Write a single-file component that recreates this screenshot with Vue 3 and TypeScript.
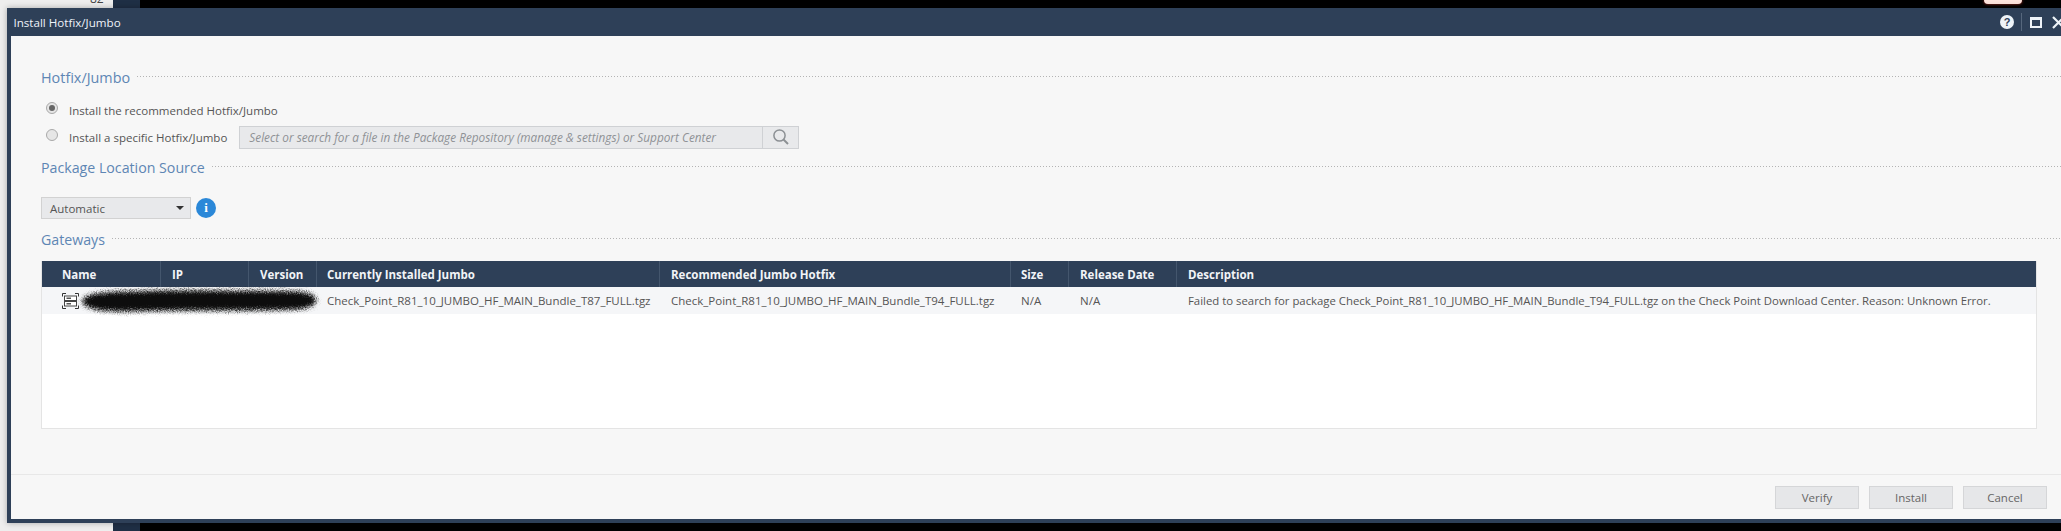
<script setup lang="ts">
const columns = [
  { label: 'Name', width: 119, pad: 20 },
  { label: 'IP', width: 88, pad: 11 },
  { label: 'Version', width: 68, pad: 11 },
  { label: 'Currently Installed Jumbo', width: 343, pad: 10 },
  { label: 'Recommended Jumbo Hotfix', width: 351, pad: 11 },
  { label: 'Size', width: 58, pad: 10 },
  { label: 'Release Date', width: 108, pad: 11 },
  { label: 'Description', width: 0, pad: 11 },
]
function colStyle(c: { width: number; pad: number }) {
  return c.width ? { width: c.width + 'px', paddingLeft: c.pad + 'px' } : { flex: '1', paddingLeft: c.pad + 'px' }
}
const cells = [
  { text: 'Check_Point_R81_10_JUMBO_HF_MAIN_Bundle_T87_FULL.tgz', width: 343, pad: 10 },
  { text: 'Check_Point_R81_10_JUMBO_HF_MAIN_Bundle_T94_FULL.tgz', width: 351, pad: 11 },
  { text: 'N/A', width: 58, pad: 10 },
  { text: 'N/A', width: 108, pad: 11 },
  {
    text: 'Failed to search for package Check_Point_R81_10_JUMBO_HF_MAIN_Bundle_T94_FULL.tgz on the Check Point Download Center. Reason: Unknown Error.',
    width: 0,
    pad: 11,
  },
]
</script>

<template>
  <div class="page">
    <div class="backdrop">
      <div class="bd-light"><span class="bd-num">82</span></div>
      <div class="bd-navy"></div>
      <div class="bd-black"></div>
    </div>
    <div class="badge"></div>
    <div class="dialog">
      <div class="titlebar">
        <span class="title">Install Hotfix/Jumbo</span>
        <div class="tools">
          <span class="help">?</span>
          <span class="sep"></span>
          <span class="maxi"></span>
          <svg class="close" width="16" height="16" viewBox="0 0 16 16"><path d="M2 3 L13 14 M13 3 L2 14" stroke="#eef3f8" stroke-width="2.2" fill="none" /></svg>
        </div>
      </div>
      <div class="body">
        <div class="content">
          <div class="section first">
            <span class="sec-title wide">Hotfix/Jumbo</span>
            <span class="dots"></span>
          </div>
          <div class="radio-row r1">
            <span class="radio on"><i></i></span>
            <span class="lbl">Install the recommended Hotfix/Jumbo</span>
          </div>
          <div class="radio-row r2">
            <span class="radio"></span>
            <span class="lbl">Install a specific Hotfix/Jumbo</span>
            <div class="search">
              <span class="ph">Select or search for a file in the Package Repository (manage &amp; settings) or Support Center</span>
              <span class="search-btn">
                <svg width="18" height="18" viewBox="0 0 18 18"><circle cx="7.5" cy="7.5" r="5.6" fill="none" stroke="#8c9094" stroke-width="1.5" /><path d="M11.5 11.5 L16 16" stroke="#8c9094" stroke-width="2" /></svg>
              </span>
            </div>
          </div>
          <div class="section second">
            <span class="sec-title">Package Location Source</span>
            <span class="dots"></span>
          </div>
          <div class="source-row">
            <div class="select"><span>Automatic</span><i class="caret"></i></div>
            <span class="info">i</span>
          </div>
          <div class="section third">
            <span class="sec-title">Gateways</span>
            <span class="dots"></span>
          </div>
          <div class="table">
            <div class="thead">
              <div v-for="c in columns" :key="c.label" class="th" :style="colStyle(c)">{{ c.label }}</div>
            </div>
            <div class="tr">
              <div class="td" :style="colStyle({ width: 275, pad: 20 })">
                <svg class="gw" width="17" height="16" viewBox="0 0 17 16">
                  <path d="M0.5 3.5 V0.5 H4 M13 0.5 H16.5 V3.5 M16.5 12.5 V15.5 H13 M4 15.5 H0.5 V12.5" fill="none" stroke="#333" stroke-width="1" />
                  <rect x="2.5" y="3" width="12" height="4.5" fill="#fff" stroke="#444" stroke-width="1" />
                  <rect x="2.5" y="8.5" width="12" height="4.5" fill="#fff" stroke="#444" stroke-width="1" />
                  <path d="M4.5 5.2 H9 M4.5 10.7 H9" stroke="#555" stroke-width="1.4" />
                </svg>
                <svg class="blur-mark" width="245" height="34" viewBox="0 0 245 34">
                  <defs>
                    <filter id="grain" x="-5%" y="-30%" width="110%" height="160%">
                      <feGaussianBlur in="SourceGraphic" stdDeviation="2" result="soft" />
                      <feTurbulence type="fractalNoise" baseFrequency="0.9" numOctaves="2" seed="4" result="noise" />
                      <feDisplacementMap in="soft" in2="noise" scale="7" xChannelSelector="R" yChannelSelector="G" />
                    </filter>
                  </defs>
                  <path
                    d="M9 17 C13 7 40 8 70 7 C110 6 170 7 205 7 C226 7 242 8 243 16 C243 25 226 26 200 26 C160 27 110 26 70 27 C40 28 12 28 9 17 Z"
                    fill="#0c0c0c"
                    filter="url(#grain)"
                  />
                </svg>
              </div>
              <div
                v-for="(cell, i) in cells"
                :key="i"
                class="td"
                :class="{ desc: !cell.width }"
                :style="colStyle(cell)"
              >{{ cell.text }}</div>
            </div>
          </div>
        </div>
        <div class="footer">
          <button class="btn">Verify</button>
          <button class="btn">Install</button>
          <button class="btn">Cancel</button>
        </div>
      </div>
    </div>
  </div>
</template>

<style>
html, body { margin: 0; padding: 0; background: #000; overflow: hidden; }
</style>

<style scoped>
.page {
  position: relative;
  width: 2061px;
  height: 531px;
  overflow: hidden;
  background: #000;
  font-family: "Open Sans", "Noto Sans", sans-serif;
}
.backdrop {
  position: absolute;
  inset: 0;
  display: flex;
}
.bd-light { width: 113px; background: #eeeeee; position: relative; overflow: hidden; }
.bd-num {
  position: absolute;
  left: 90px;
  top: -10px;
  font-size: 12px;
  color: #444;
}
.bd-navy { width: 27px; background: #1f2f45; }
.bd-black { flex: 1; background: #000; }
.badge {
  position: absolute;
  left: 1984px;
  top: 0;
  width: 38px;
  height: 4px;
  background: #fde3dc;
  border-radius: 0 0 4px 4px;
  box-shadow: 0 0 3px #c0392b;
}
.dialog {
  position: absolute;
  left: 7px;
  top: 8px;
  width: 2054px;
  height: 515px;
  display: flex;
  flex-direction: column;
  background: #2e4058;
  box-shadow: 0 0 6px rgba(0, 0, 0, 0.3);
}
.titlebar {
  height: 28px;
  flex: none;
  display: flex;
  align-items: center;
  justify-content: space-between;
  color: #fff;
}
.title { font-size: 11.6px; padding-left: 6.5px; color: #eef3f8; }
.tools { display: flex; align-items: center; margin-right: -6px; }
.help {
  width: 14px;
  height: 14px;
  border-radius: 50%;
  background: #eef3f8;
  color: #2e4058;
  font: bold 11px/14px "Liberation Sans", sans-serif;
  text-align: center;
}
.sep { width: 1px; height: 18px; background: #56677d; margin: 0 8px 0 7px; }
.maxi {
  width: 8px;
  height: 6px;
  border: 2px solid #eef3f8;
  border-top-width: 3px;
  margin-right: 9px;
}
.close { display: block; }
.body {
  flex: 1;
  margin-left: 4px;
  margin-bottom: 4px;
  background: #f7f7f7;
  display: flex;
  flex-direction: column;
  min-height: 0;
}
.content { flex: 1; padding: 0 0 0 30px; min-height: 0; }
.section { display: flex; align-items: center; }
.section.first { margin-top: 32px; }
.section.second { margin-top: 9px; }
.section.third { margin-top: 11px; }
.sec-title { font-size: 14.2px; line-height: 19px; color: #5e86b4; white-space: nowrap; }
.sec-title.wide { font-size: 14.4px; }
.dots {
  flex: 1;
  height: 1px;
  margin: -2px 0 0 7px;
  background-image: repeating-linear-gradient(to right, #b4b4b4 0, #b4b4b4 1px, transparent 1px, transparent 3px);
}
.radio-row { display: flex; align-items: center; height: 24px; padding-left: 5px; }
.radio-row.r1 { margin-top: 11px; }
.radio-row.r2 { margin-top: 3px; }
.radio {
  width: 12px;
  height: 12px;
  border-radius: 50%;
  border: 1px solid #a9a9a9;
  background: #e6e6e6;
  box-sizing: border-box;
  display: flex;
  align-items: center;
  justify-content: center;
  margin-top: -5px;
  margin-right: 11px;
}
.radio.on i { width: 6px; height: 6px; border-radius: 50%; background: #666; display: block; }
.lbl { font-size: 11.5px; color: #555; white-space: nowrap; }
.search {
  display: flex;
  width: 560px;
  height: 23px;
  margin-left: 12px;
  background: #e8e9eb;
  border: 1px solid #cfd1d4;
  box-sizing: border-box;
}
.ph {
  flex: 1;
  font-size: 11.8px;
  font-style: italic;
  line-height: 21px;
  color: #8f9296;
  padding-left: 9px;
  white-space: nowrap;
  overflow: hidden;
}
.search-btn {
  width: 35px;
  border-left: 1px solid #cfd1d4;
  display: flex;
  align-items: center;
  justify-content: center;
}
.source-row { display: flex; align-items: center; margin-top: 20px; }
.select {
  width: 150px;
  height: 22px;
  background: #e8e9eb;
  border: 1px solid #d2d2d2;
  box-sizing: border-box;
  display: flex;
  align-items: center;
  justify-content: space-between;
  padding: 0 6px 0 8px;
  font-size: 11.5px;
  color: #555;
}
.caret {
  width: 0;
  height: 0;
  border-left: 4px solid transparent;
  border-right: 4px solid transparent;
  border-top: 4px solid #333;
}
.info {
  width: 20px;
  height: 20px;
  border-radius: 50%;
  background: #2b88d8;
  color: #fff;
  font: bold 13px/20px "Liberation Serif", serif;
  text-align: center;
  margin-left: 5px;
}
.table {
  width: 1996px;
  height: 168px;
  margin-top: 12px;
  background: #fff;
  border: 1px solid #e4e4e4;
  border-top: 0;
  box-sizing: border-box;
}
.thead {
  height: 26px;
  display: flex;
  background: #2e4058;
}
.th {
  box-sizing: border-box;
  font-size: 11.5px;
  font-weight: 700;
  line-height: 28px;
  color: #f2f4f7;
  border-right: 1px solid #44566d;
  white-space: nowrap;
}
.th:last-child { border-right: 0; }
.tr {
  height: 27px;
  display: flex;
  background: #f5f6f8;
}
.td {
  box-sizing: border-box;
  font-size: 11.5px;
  line-height: 27px;
  color: #555;
  white-space: nowrap;
  display: flex;
  align-items: center;
}
.td.desc { font-size: 11.37px; }
.gw { flex: none; }
.blur-mark {
  flex: none;
  margin: 0 -8px 0 -6px;
  overflow: visible;
}
.footer {
  flex: none;
  height: 45px;
  box-sizing: border-box;
  border-top: 1px solid #e8e8e8;
  display: flex;
  justify-content: flex-end;
  align-items: flex-start;
  gap: 10px;
  padding: 11px 14px 0 0;
}
.btn {
  width: 84px;
  height: 23px;
  box-sizing: border-box;
  background: #e6e7e9;
  border: 1px solid #d5d6d8;
  font-family: inherit;
  font-size: 11.5px;
  color: #666;
  padding: 0;
}
</style>
